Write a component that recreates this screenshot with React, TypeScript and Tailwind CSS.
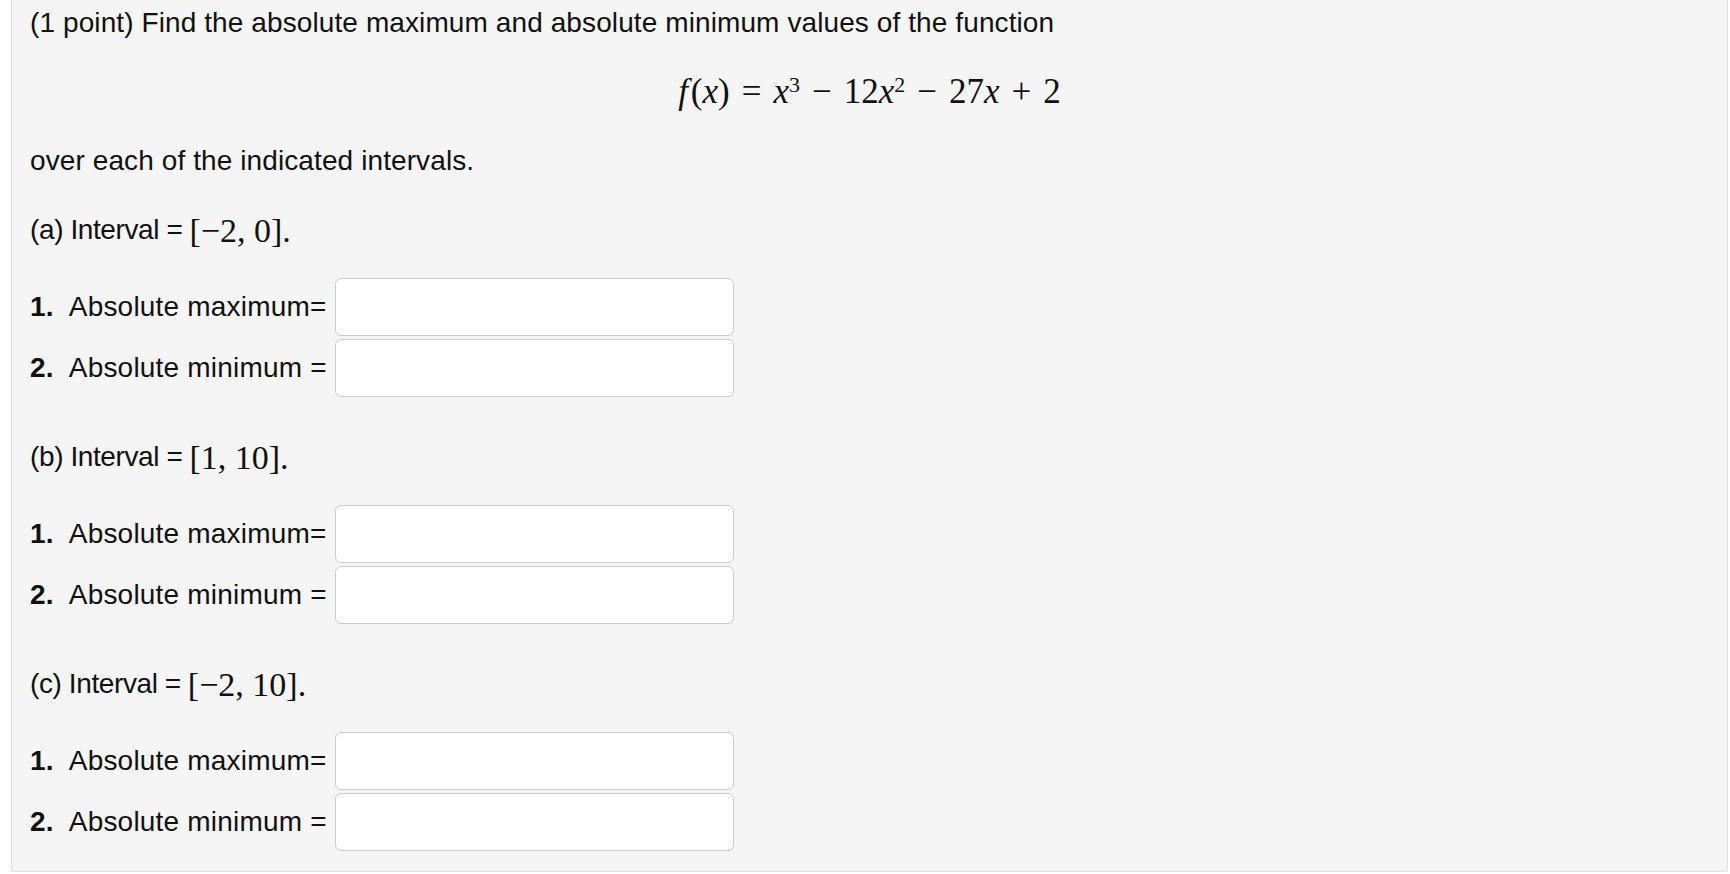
import type { ReactNode } from 'react';

type Part = { letter: string; interval: ReactNode };

const parts: Part[] = [
  { letter: 'a', interval: <>[−2,&nbsp;0]</> },
  { letter: 'b', interval: <>[1,&nbsp;10]</> },
  { letter: 'c', interval: <>[−2,&nbsp;10]</> },
];

function I({ children }: { children: ReactNode }) {
  return <span className="italic">{children}</span>;
}

function Op({ children }: { children: ReactNode }) {
  return <span className="mx-[12px]">{children}</span>;
}

function AnswerRow({ n, label }: { n: number; label: string }) {
  return (
    <div className="flex h-[58px] items-center">
      <span className="w-[305px] text-[28px] leading-[32px] tracking-[0.2px]">
        <b className="font-bold">{n}.</b>
        <span className="ml-[15px]">{label}</span>
      </span>
      <input
        type="text"
        className="h-[58px] w-[399px] rounded-[6px] border border-[#cccccc] bg-white px-2 text-[20px] outline-none"
      />
    </div>
  );
}

export default function App() {
  return (
    <div className="min-h-[874px] bg-white pl-[11px] pr-[2px] font-['Liberation_Sans',Arial,sans-serif] text-[#111111]">
      <div className="rounded-b-[4px] border border-t-0 border-[#e0e0e0] bg-[#f5f5f5] pb-[20px] pl-[18px] pt-[7px]">
        <p className="text-[28px] leading-[32px] tracking-[0.1px]">
          (1 point) Find the absolute maximum and absolute minimum values of the function
        </p>
        <div className="mt-[33px] flex h-[40px] items-center justify-center pr-[18px] font-['Liberation_Serif',serif] text-[35px]">
          <span>
            <I>f</I>
            <span className="ml-[3px]">(</span>
            <I>x</I>)<Op>=</Op><I>x</I>
            <sup className="text-[22px]">3</sup>
            <Op>−</Op>12<I>x</I>
            <sup className="text-[22px]">2</sup>
            <Op>−</Op>27<I>x</I>
            <Op>+</Op>2
          </span>
        </div>
        <p className="mt-[33px] text-[28px] leading-[32px] tracking-[0.1px]">over each of the indicated intervals.</p>
        {parts.map((part, i) => (
          <section key={part.letter} className={i === 0 ? 'mt-[35px]' : 'mt-[42px]'}>
            <p className="flex h-[36px] items-center text-[28px]">
              <span className="tracking-[-0.4px]">({part.letter}) Interval =</span>
              <span className="ml-[7px] font-['Liberation_Serif',serif] text-[34px]">{part.interval}.</span>
            </p>
            <div className="mt-[30px] flex flex-col gap-[3px]">
              <AnswerRow n={1} label="Absolute maximum=" />
              <AnswerRow n={2} label="Absolute minimum =" />
            </div>
          </section>
        ))}
      </div>
    </div>
  );
}
